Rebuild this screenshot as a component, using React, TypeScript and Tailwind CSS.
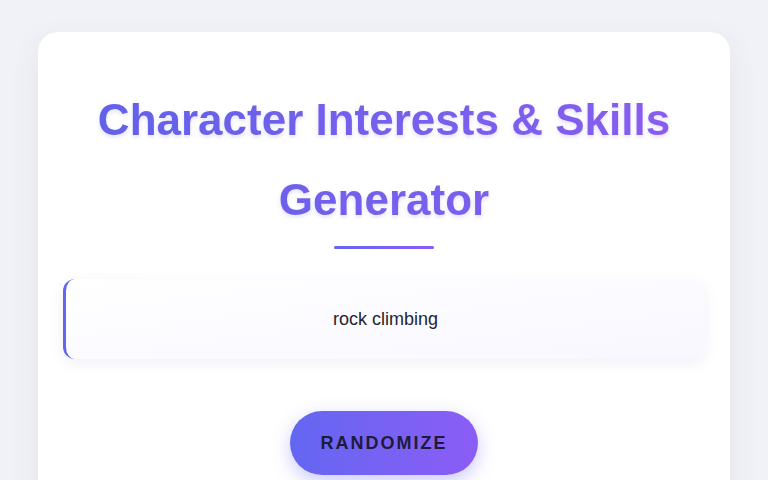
import React, { useState } from "react";

const interests = [
  "rock climbing",
  "oil painting",
  "lock picking",
  "falconry",
  "chess",
  "cartography",
  "beekeeping",
  "fencing",
];

export default function App() {
  const [current, setCurrent] = useState(interests[0]);

  const randomize = () => {
    const next = interests[Math.floor(Math.random() * interests.length)];
    setCurrent(next);
  };

  return (
    <div className="min-h-[480px] bg-[#f1f2f7] px-[38px] pt-[32px] font-['Liberation_Sans',Arial,sans-serif]">
      <div className="rounded-[20px] bg-white px-[25px] pt-[48px] pb-[40px] shadow-[0_10px_30px_rgba(80,80,120,0.08)]">
        <h1 className="bg-gradient-to-r from-[#5f62e8] to-[#8a5cf0] bg-clip-text text-center text-[44px] font-bold leading-[80px] text-transparent [filter:drop-shadow(0_2px_2px_rgba(99,102,241,0.2))]">
          Character Interests &amp; Skills Generator
        </h1>
        <div className="mx-auto mt-[6px] h-[3px] w-[100px] rounded-full bg-gradient-to-r from-[#6366f1] to-[#8b5cf6]" />

        <div className="mt-[30px] flex h-[80px] items-center justify-center rounded-[12px] border-l-[3px] border-[#6366f1] bg-gradient-to-br from-white to-[#f8f7ff] shadow-[0_4px_14px_rgba(80,80,140,0.08)]">
          <p className="text-[18px] text-[#1f2430]">{current}</p>
        </div>

        <div className="mt-[52px] flex justify-center">
          <button
            onClick={randomize}
            className="h-[64px] w-[188px] rounded-full bg-gradient-to-r from-[#6366f1] to-[#8b5cf6] text-[18px] font-bold uppercase tracking-[2px] text-[#1e1b3a] shadow-[0_6px_18px_rgba(99,102,241,0.35)]"
          >
            Randomize
          </button>
        </div>
      </div>
    </div>
  );
}
